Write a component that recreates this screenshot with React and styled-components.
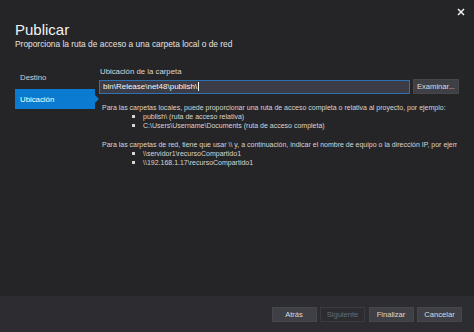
import React from 'react';
import styled, { createGlobalStyle } from 'styled-components';

const GlobalStyle = createGlobalStyle`
  html, body {
    margin: 0;
    padding: 0;
    background: #252527;
  }
  body {
    font-family: "Liberation Sans", Arial, sans-serif;
    color: #e6e6e6;
  }
`;

const Window = styled.div`
  width: 474px;
  height: 332px;
  display: flex;
  flex-direction: column;
  background: #252527;
  overflow: hidden;
`;

const TopBar = styled.div`
  height: 22px;
  display: flex;
  justify-content: flex-end;
  align-items: flex-start;
  padding: 8px 9px 0 0;
  box-sizing: border-box;
`;

const CloseButton = styled.button`
  width: 8px;
  height: 8px;
  padding: 0;
  border: 0;
  background: none;
  display: flex;
  cursor: pointer;
`;

const Header = styled.div`
  padding: 0 15px;
`;

const Title = styled.h1`
  margin: 0;
  font-weight: normal;
  font-size: 15px;
  line-height: 16px;
  color: #f2f2f2;
`;

const Subtitle = styled.p`
  margin: 0;
  font-size: 8.4px;
  line-height: 12px;
  color: #e2e2e2;
`;

const Body = styled.div`
  flex: 1;
  display: flex;
  gap: 4px;
  padding: 16px 0 0 15px;
  min-height: 0;
`;

const Sidebar = styled.ul`
  list-style: none;
  margin: 0;
  padding: 1px 0 0;
  width: 80px;
  display: flex;
  flex-direction: column;
  gap: 2px;
`;

const NavItem = styled.li`
  position: relative;
  height: 20px;
  display: flex;
  align-items: center;
  padding-left: 5px;
  font-size: 7.8px;
  color: ${(p) => (p.$active ? '#ffffff' : '#cfcfcf')};
  background: ${(p) => (p.$active ? '#0a7bd0' : 'transparent')};

  &::after {
    content: '';
    display: ${(p) => (p.$active ? 'block' : 'none')};
    position: absolute;
    right: -4px;
    top: 6px;
    border-top: 4px solid transparent;
    border-bottom: 4px solid transparent;
    border-left: 4px solid #0a7bd0;
  }
`;

const Content = styled.div`
  flex: 1;
  min-width: 0;
  padding-right: 15px;
  display: flex;
  flex-direction: column;
`;

const FieldLabel = styled.label`
  font-size: 7.8px;
  line-height: 11px;
  color: #d8d8d8;
  padding-left: 1px;
  margin-bottom: 2px;
`;

const InputRow = styled.div`
  display: flex;
  gap: 3px;
  align-items: center;
`;

const PathInput = styled.div`
  flex: 1;
  height: 14px;
  box-sizing: border-box;
  display: flex;
  align-items: center;
  padding-left: 3px;
  background: #3b3c46;
  border: 1px solid #2f72b4;
  font-size: 8px;
  color: #f4f4f4;
  white-space: nowrap;
`;

const Caret = styled.span`
  display: inline-block;
  width: 1px;
  height: 9px;
  margin-left: 1px;
  background: #f4f4f4;
`;

const Button = styled.button`
  width: ${(p) => p.$width || 45}px;
  height: 15px;
  padding: 0;
  box-sizing: border-box;
  font-family: inherit;
  font-size: 7.6px;
  color: ${(p) => (p.disabled ? '#6b6b70' : '#dcdcdc')};
  background: ${(p) => (p.disabled ? '#2d2d31' : '#3f3f46')};
  border: 1px solid ${(p) => (p.disabled ? '#3a3a3f' : '#46464d')};
`;

const Help = styled.div`
  margin: 9px 2px 0 0;
  padding-left: 3px;
  overflow: hidden;
  font-size: 7px;
  line-height: 9px;
  color: #d6d6d6;
  white-space: nowrap;
`;

const HelpBlock = styled.div`
  & + & {
    margin-top: 10px;
  }
`;

const HelpText = styled.p`
  margin: 0;
`;

const BulletList = styled.ul`
  list-style: none;
  margin: 0;
  padding: 0 0 0 41px;
`;

const Bullet = styled.li`
  position: relative;

  &::before {
    content: '';
    position: absolute;
    left: -11px;
    top: 3px;
    width: 2.5px;
    height: 2.5px;
    background: #d6d6d6;
  }
`;

const Footer = styled.div`
  height: 36px;
  flex-shrink: 0;
  background: #2d2d31;
  display: flex;
  justify-content: flex-end;
  align-items: center;
  gap: 3.5px;
  padding: 1px 12px 0 0;
  box-sizing: border-box;
`;

function CloseIcon() {
  return (
    <svg width="8" height="8" viewBox="0 0 8 8">
      <path d="M1 1 L7 7 M7 1 L1 7" stroke="#f0f0f0" strokeWidth="1.5" />
    </svg>
  );
}

function App() {
  return (
    <Window>
      <GlobalStyle />
      <TopBar>
        <CloseButton aria-label="Cerrar">
          <CloseIcon />
        </CloseButton>
      </TopBar>
      <Header>
        <Title>Publicar</Title>
        <Subtitle>Proporciona la ruta de acceso a una carpeta local o de red</Subtitle>
      </Header>
      <Body>
        <Sidebar>
          <NavItem>Destino</NavItem>
          <NavItem $active>Ubicación</NavItem>
        </Sidebar>
        <Content>
          <FieldLabel>Ubicación de la carpeta</FieldLabel>
          <InputRow>
            <PathInput>
              bin\Release\net48\publish\
              <Caret />
            </PathInput>
            <Button $width={46}>Examinar...</Button>
          </InputRow>
          <Help>
            <HelpBlock>
              <HelpText>
                Para las carpetas locales, puede proporcionar una ruta de acceso completa o relativa al proyecto, por ejemplo:
              </HelpText>
              <BulletList>
                <Bullet>publish\ (ruta de acceso relativa)</Bullet>
                <Bullet>C:\Users\Username\Documents (ruta de acceso completa)</Bullet>
              </BulletList>
            </HelpBlock>
            <HelpBlock>
              <HelpText>
                Para las carpetas de red, tiene que usar \\ y, a continuación, indicar el nombre de equipo o la dirección IP, por ejemplo:
              </HelpText>
              <BulletList>
                <Bullet>\\servidor1\recursoCompartido1</Bullet>
                <Bullet>\\192.168.1.17\recursoCompartido1</Bullet>
              </BulletList>
            </HelpBlock>
          </Help>
        </Content>
      </Body>
      <Footer>
        <Button>Atrás</Button>
        <Button disabled>Siguiente</Button>
        <Button>Finalizar</Button>
        <Button>Cancelar</Button>
      </Footer>
    </Window>
  );
}

export default App;
